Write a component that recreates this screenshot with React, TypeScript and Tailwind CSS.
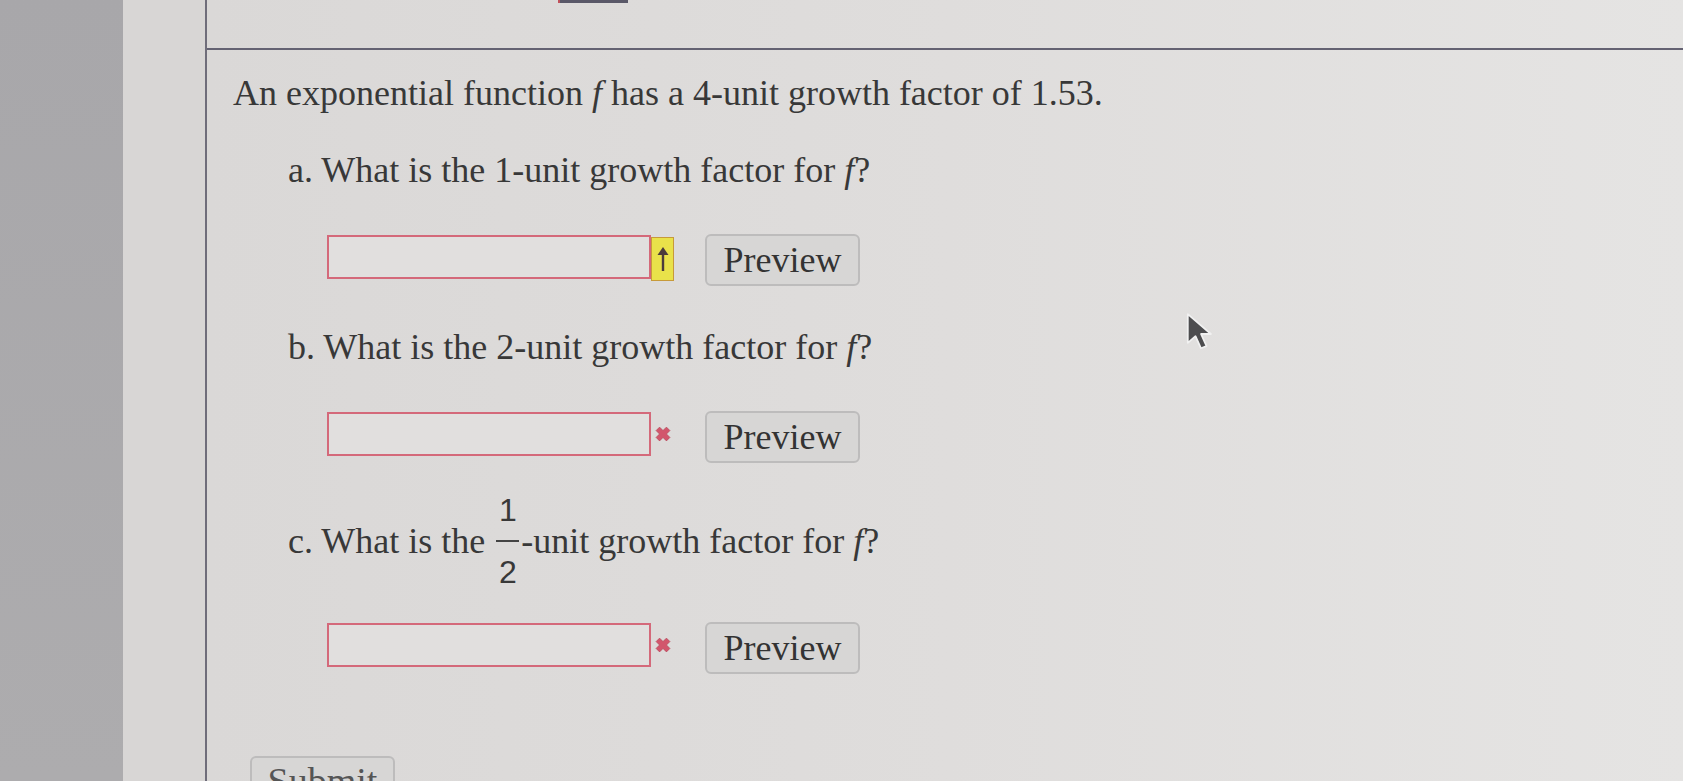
import React from 'react';

const serif = { fontFamily: '"Liberation Serif", "Times New Roman", serif' };

const Cross = () => (
  <svg width="22" height="22" viewBox="0 0 16 16" className="shrink-0">
    <path d="M3 5.5 L5.5 3 L8 5.5 L10.5 3 L13 5.5 L10.5 8 L13 10.5 L10.5 13 L8 10.5 L5.5 13 L3 10.5 L5.5 8 Z" fill="#d2566c" stroke="#b84a5c" strokeWidth="0.6" />
  </svg>
);

const UpMark = () => (
  <div className="mt-[3px] flex h-[44px] w-[23px] shrink-0 items-center justify-center border border-[#c79a3a] bg-[#e9e24a]">
    <svg width="14" height="30" viewBox="0 0 14 30">
      <path d="M7 3 L1.5 11 L5.8 11 L5.8 27 L8.2 27 L8.2 11 L12.5 11 Z" fill="#4b3c3c" />
    </svg>
  </div>
);

const PreviewButton = () => (
  <button
    className="h-[52px] w-[155px] rounded-md border-2 border-[#bdbcbc] bg-[#d7d6d5] text-[36px] leading-none text-[#333]"
    style={serif}>
    Preview
  </button>
);

const AnswerRow = ({ mark }: { mark: 'up' | 'x' }) => (
  <div className="flex items-start pl-[94px]">
    <div className="mt-[1px] h-[44px] w-[324px] shrink-0 border-2 border-[#d4697a] bg-[#e1dfde]" />
    {mark === 'up' ? (
      <UpMark />
    ) : (
      <div className="flex h-[46px] w-[23px] items-center justify-center">
        <Cross />
      </div>
    )}
    <div className="ml-[31px]">
      <PreviewButton />
    </div>
  </div>
);

export default function App() {
  return (
    <div className="relative flex h-[781px] w-[1683px] overflow-hidden text-[#383838]" style={serif}>
      <div className="h-full w-[123px] shrink-0 bg-gradient-to-b from-[#a8a7aa] to-[#adacae]" />
      <div className="h-full w-[84px] shrink-0 border-r-2 border-[#6f6d7a] bg-[#d8d6d5]" />

      <div className="flex flex-1 flex-col bg-gradient-to-r from-[#dad8d7] via-[#dfdddc] to-[#e5e4e3]">
        <div className="h-[50px] shrink-0 border-b-2 border-[#646272] pl-[351px]">
          <div className="h-[3px] w-[70px] border-l-2 border-[#c0505a] bg-[#5a5868]" />
        </div>

        <div className="flex shrink-0 flex-col pl-[26px] pt-[24px]">
          <p className="text-[36px] leading-[38px]">
            An exponential function <i>f</i> has a 4-unit growth factor of 1.53.
          </p>

          <div className="mt-[39px] pl-[55px]">
            <p className="text-[36px] leading-[38px]">
              a. What is the 1-unit growth factor for <i>f</i>?
            </p>
          </div>
          <div className="mt-[45px]">
            <AnswerRow mark="up" />
          </div>

          <div className="mt-[42px] pl-[55px]">
            <p className="text-[36px] leading-[38px]">
              b. What is the 2-unit growth factor for <i>f</i>?
            </p>
          </div>
          <div className="mt-[45px]">
            <AnswerRow mark="x" />
          </div>

          <div className="mt-[31px] flex items-center pl-[55px] text-[36px] leading-[38px]">
            <span>c. What is the&nbsp;</span>
            <span
              className="mx-[2px] inline-flex flex-col items-center text-[32px] leading-[32px]"
              style={{ fontFamily: '"Liberation Sans", Arial, sans-serif' }}>
              <span>1</span>
              <span className="my-[14px] h-[2px] w-[23px] bg-[#444]" />
              <span>2</span>
            </span>
            <span>-unit growth factor for&nbsp;</span>
            <i>f</i>
            <span>?</span>
          </div>
          <div className="mt-[34px]">
            <AnswerRow mark="x" />
          </div>

          <div className="mt-[82px] pl-[17px]">
            <button
              className="flex h-[56px] w-[145px] items-start justify-center rounded-md border-2 border-[#bdbcbc] bg-[#d7d6d5] pt-[4px] text-[38px] leading-none text-[#555]"
              style={serif}>
              Submit
            </button>
          </div>
        </div>
      </div>

      <svg className="absolute left-[1184px] top-[312px]" width="34" height="44" viewBox="0 0 30 40">
        <path
          d="M3 2 L3 28 L10 22 L15 33 L20 31 L15 20 L24 20 Z"
          fill="#4d4d4f"
          stroke="#f1f1f1"
          strokeWidth="1.6"
          strokeLinejoin="round"
        />
      </svg>
    </div>
  );
}
